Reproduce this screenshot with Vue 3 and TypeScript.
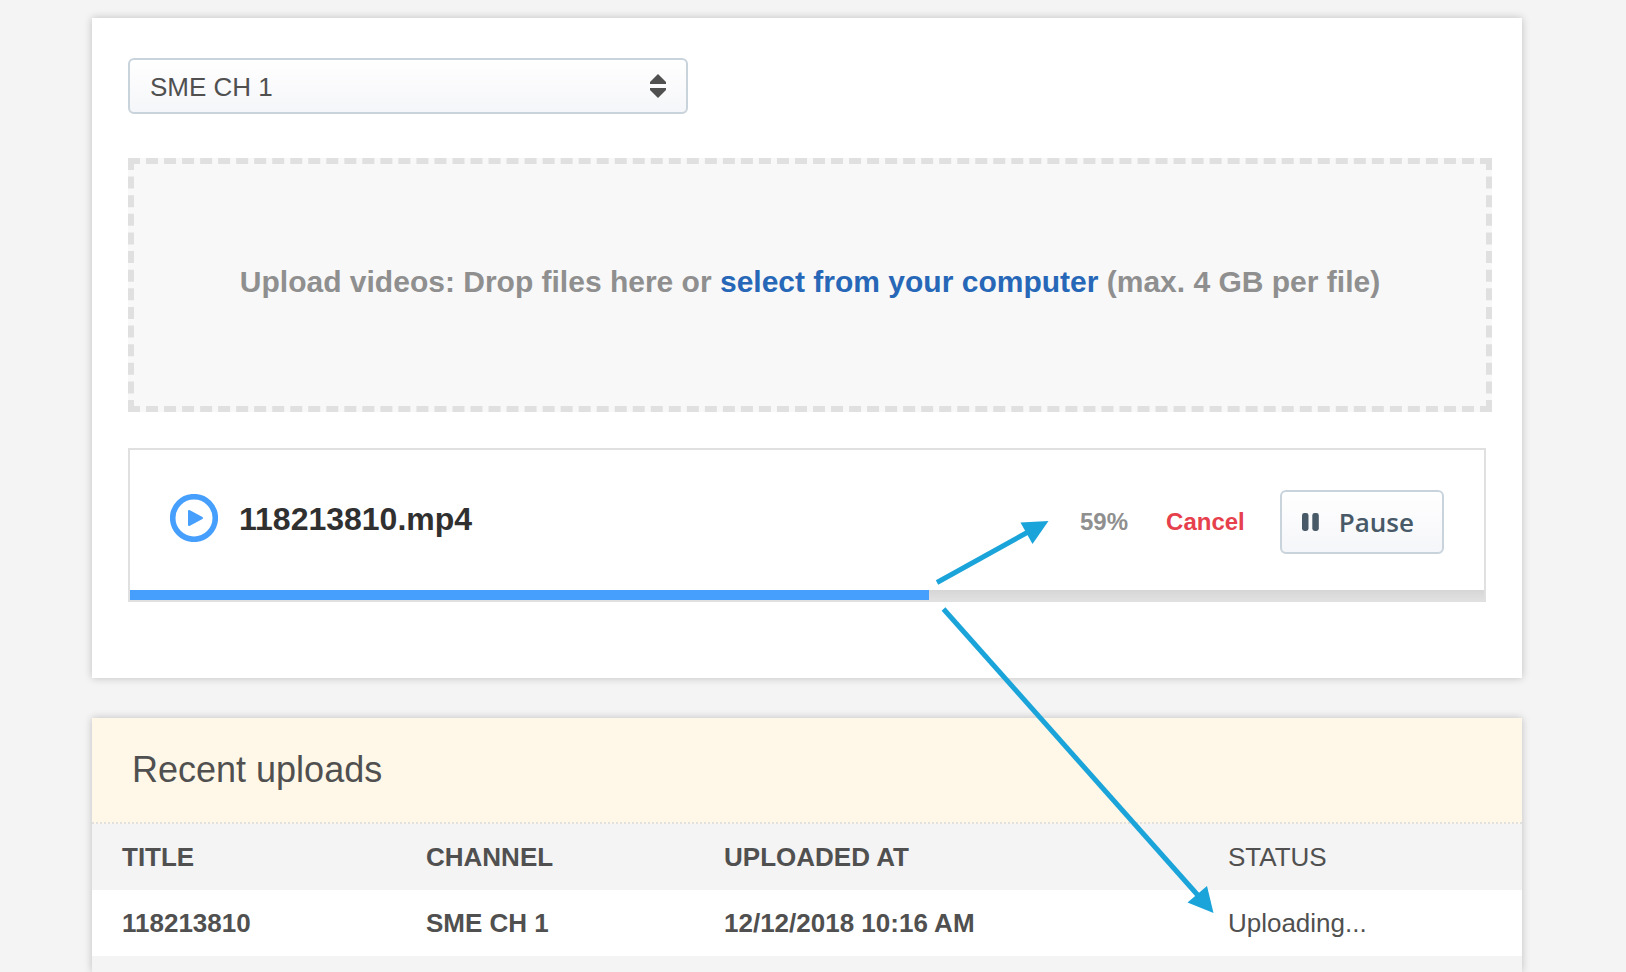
<script setup lang="ts">
import { ref } from 'vue'

interface Upload {
  title: string
  channel: string
  uploadedAt: string
  status: string
}

const channels = ['SME CH 1']
const channel = ref(channels[0])
const progress = ref(59)

const uploads: Upload[] = [
  { title: '118213810', channel: 'SME CH 1', uploadedAt: '12/12/2018 10:16 AM', status: 'Uploading...' },
]
</script>

<template>
  <main class="page">
    <section class="card uploader">
      <div class="select-wrap">
        <select v-model="channel" class="select" aria-label="Channel">
          <option v-for="c in channels" :key="c" :value="c">{{ c }}</option>
        </select>
        <svg class="select-icon" width="16" height="24" viewBox="0 0 16 24" aria-hidden="true">
          <path d="M8 0l8 8v2H0V8zM8 24l8-8v-2H0v2z" fill="#505050" />
        </svg>
      </div>

      <div class="dropzone">
        <p class="drop-text">
          Upload videos: Drop files here or <a href="#">select from your computer</a> (max. 4 GB per file)
        </p>
      </div>

      <article class="upload">
        <div class="upload-body">
          <svg class="play" width="48" height="48" viewBox="0 0 48 48" aria-hidden="true">
            <circle cx="24" cy="24" r="21.3" fill="none" stroke="#479ffd" stroke-width="5.6" />
            <path d="M19 17v14l13-7z" fill="#479ffd" stroke="#479ffd" stroke-width="2" stroke-linejoin="round" />
          </svg>
          <h2 class="file-name">118213810.mp4</h2>
          <span class="percent">{{ progress }}%</span>
          <button type="button" class="cancel">Cancel</button>
          <button type="button" class="pause">
            <svg width="17" height="18" viewBox="0 0 17 18" aria-hidden="true">
              <rect width="6.5" height="18" rx="2.4" fill="#485968" />
              <rect x="10.3" width="6.5" height="18" rx="2.4" fill="#485968" />
            </svg>
            Pause
          </button>
        </div>
        <div class="track" role="progressbar" aria-label="Upload progress" :aria-valuenow="progress" aria-valuemin="0" aria-valuemax="100">
          <div class="bar" :style="{ width: progress + '%' }"></div>
        </div>
      </article>
    </section>

    <section class="card recent">
      <h1 class="recent-title">Recent uploads</h1>
      <table class="table">
        <colgroup>
          <col class="col-title" />
          <col class="col-channel" />
          <col class="col-date" />
          <col />
        </colgroup>
        <thead>
          <tr>
            <th scope="col">TITLE</th>
            <th scope="col">CHANNEL</th>
            <th scope="col">UPLOADED AT</th>
            <th scope="col" class="status">STATUS</th>
          </tr>
        </thead>
        <tbody>
          <tr v-for="u in uploads" :key="u.title">
            <td>{{ u.title }}</td>
            <td>{{ u.channel }}</td>
            <td>{{ u.uploadedAt }}</td>
            <td class="status">{{ u.status }}</td>
          </tr>
        </tbody>
      </table>
    </section>

    <svg class="arrows" width="290" height="400" viewBox="930 515 290 400" aria-hidden="true">
      <g fill="#1aa4d9" stroke="none">
        <path d="M1048.500 521l-28 1.500 12 21.500z" />
        <path d="M1213.500 913l-6.500-27-19.500 16.500z" />
      </g>
      <g stroke="#1aa4d9" stroke-width="5">
        <path d="M937 582.500L1029 531.500" />
        <path d="M943.500 609L1199 896.500" />
      </g>
    </svg>
  </main>
</template>

<style>
body {
  margin: 0;
  background: #f4f4f4;
}
</style>

<style scoped>
.page {
  position: relative;
  box-sizing: border-box;
  min-height: 100vh;
  padding: 18px 104px 0 92px;
  display: flex;
  flex-direction: column;
  gap: 40px;
  overflow: hidden;
  color: #505050;
  font-family: "Liberation Sans", Arial, sans-serif;
  font-size: 26px;
  line-height: 30px;
}
.card {
  background: #fff;
  box-shadow: 0 0 8px rgba(0, 0, 0, 0.22);
}
.uploader {
  padding: 40px 36px 76px;
}
.select-wrap {
  position: relative;
  max-width: 560px;
}
.select {
  display: block;
  box-sizing: border-box;
  width: 100%;
  height: 56px;
  padding: 2px 60px 0 20px;
  appearance: none;
  border: 2px solid #c9d3dc;
  border-radius: 6px;
  background: linear-gradient(#fff, #f5f6f9);
  color: inherit;
  font: inherit;
}
.select-icon {
  position: absolute;
  top: 16px;
  right: 22px;
  pointer-events: none;
}
.dropzone {
  display: flex;
  align-items: center;
  justify-content: center;
  box-sizing: border-box;
  min-height: 254px;
  margin: 44px -6px 36px 0;
  border: 6px dashed #e0e0e0;
  background: #f8f8f8;
}
.drop-text {
  margin: 0 0 6px;
  color: #8f8f8f;
  font-size: 30px;
  font-weight: 700;
  line-height: 36px;
}
.drop-text a {
  color: #2767b7;
  text-decoration: none;
}
.upload {
  border: 2px solid #e0e0e0;
}
.upload-body {
  display: flex;
  align-items: center;
  padding: 40px 40px 36px;
}
.play {
  flex: none;
  margin-bottom: 8px;
}
.file-name {
  flex: 1;
  margin: 0 20px 6px 21px;
  color: #303030;
  font-size: 32px;
  line-height: 36px;
}
.percent {
  color: #8f8f8f;
  font-size: 24px;
  font-weight: 700;
}
.cancel {
  margin: 0 35px 0 38px;
  padding: 0;
  border: 0;
  background: none;
  color: #e6404d;
  font: inherit;
  font-size: 24px;
  font-weight: 700;
}
.pause {
  display: flex;
  align-items: center;
  gap: 20px;
  box-sizing: border-box;
  height: 64px;
  padding: 0 28px 0 20px;
  border: 2px solid #c9d3dc;
  border-radius: 6px;
  background: linear-gradient(#fff, #f5f6f9);
  color: #485968;
  font: 600 26px/36px "Open Sans", "Noto Sans", sans-serif;
}
.track {
  height: 10px;
  background: linear-gradient(#d6d6d6, #e0e0e0);
}
.bar {
  height: 100%;
  background: #479ffd;
}
.recent {
  flex: 1;
  background: #f4f4f4;
}
.recent-title {
  margin: 0;
  padding: 30px 40px;
  border-bottom: 2px dotted #e0e0e0;
  background: #fff8e8;
  font-size: 36px;
  font-weight: 400;
  line-height: 44px;
}
.table {
  width: 100%;
  table-layout: fixed;
  border-collapse: collapse;
}
.col-title {
  width: 21.26%;
}
.col-channel {
  width: 20.84%;
}
.col-date {
  width: 35.24%;
}
th,
td {
  padding: 18px 30px;
  text-align: left;
  font-weight: 700;
  white-space: nowrap;
}
tbody tr {
  background: #fff;
}
.status {
  font-weight: 400;
}
.arrows {
  position: absolute;
  top: 515px;
  left: 930px;
  pointer-events: none;
}
</style>
